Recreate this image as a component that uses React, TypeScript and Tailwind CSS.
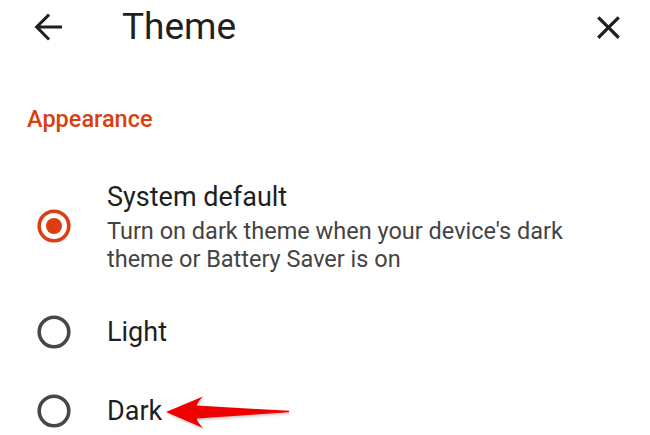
import React from "react";

function Radio({ selected }: { selected: boolean }) {
  return (
    <svg width="34" height="34" viewBox="0 0 34 34" className="shrink-0">
      <circle
        cx="17"
        cy="17"
        r="14.8"
        fill="none"
        stroke={selected ? "#dc3d13" : "#474747"}
        strokeWidth="3.6"
      />
      {selected && <circle cx="17" cy="17" r="8" fill="#dc3d13" />}
    </svg>
  );
}

export default function App() {
  return (
    <div
      className="relative w-[650px] h-[435px] overflow-hidden bg-white"
      style={{ fontFamily: "Roboto, 'Liberation Sans', sans-serif" }}
    >
      {/* Header */}
      <div className="flex items-center h-[54px]">
        <svg width="42" height="42" viewBox="0 0 24 24" className="ml-[27px] shrink-0">
          <path
            fill="#1f1f1f"
            d="M20 11.1H7.6l5.6-5.6L12 4.3 4.3 12l7.7 7.7 1.2-1.2-5.6-5.6H20v-1.8z"
          />
        </svg>
        <div className="ml-[53px] text-[37px] leading-[54px] text-[#1f1f1f]">Theme</div>
        <svg width="39" height="39" viewBox="0 0 24 24" className="ml-auto mr-[22px] shrink-0">
          <path
            fill="#1f1f1f"
            d="M19 6.41L17.59 5 12 10.59 6.41 5 5 6.41 10.59 12 5 17.59 6.41 19 12 13.41 17.59 19 19 17.59 13.41 12z"
          />
        </svg>
      </div>

      {/* Section title */}
      <div className="mt-[52px] pl-[27px] text-[23.5px] leading-[27px] font-medium text-[#d9400f]">
        Appearance
      </div>

      {/* Options */}
      <div className="mt-[46px] flex flex-col">
        <div className="flex items-center pl-[37px]">
          <Radio selected />
          <div className="ml-[36px] flex flex-col">
            <div className="text-[27px] leading-[36px] text-[#1f1f1f]">System default</div>
            <div className="mt-[2px] text-[23.5px] leading-[28px] text-[#444444]">
              Turn on dark theme when your device's dark
              <br />
              theme or Battery Saver is on
            </div>
          </div>
        </div>

        <div className="mt-[41px] flex items-center pl-[37px]">
          <Radio selected={false} />
          <div className="ml-[36px] text-[27px] leading-[36px] text-[#1f1f1f]">Light</div>
        </div>

        <div className="mt-[43px] flex items-center pl-[37px]">
          <Radio selected={false} />
          <div className="ml-[36px] text-[27px] leading-[36px] text-[#1f1f1f]">Dark</div>
        </div>
      </div>

      {/* Red annotation arrow */}
      <svg
        className="absolute left-0 top-0 pointer-events-none"
        width="650"
        height="435"
        viewBox="0 0 650 435"
      >
        <defs>
          <filter id="sh" x="-10%" y="-30%" width="120%" height="160%">
            <feDropShadow dx="1" dy="1.5" stdDeviation="1.2" floodColor="#000" floodOpacity="0.25" />
          </filter>
        </defs>
        <path
          d="M166 412 L203 396.5 Q198 401 196.5 405.5 L289 410.8 L289 412.2 L196.5 418.5 Q198 423 203 428 Z"
          fill="#ee0000"
          filter="url(#sh)"
        />
      </svg>
    </div>
  );
}
